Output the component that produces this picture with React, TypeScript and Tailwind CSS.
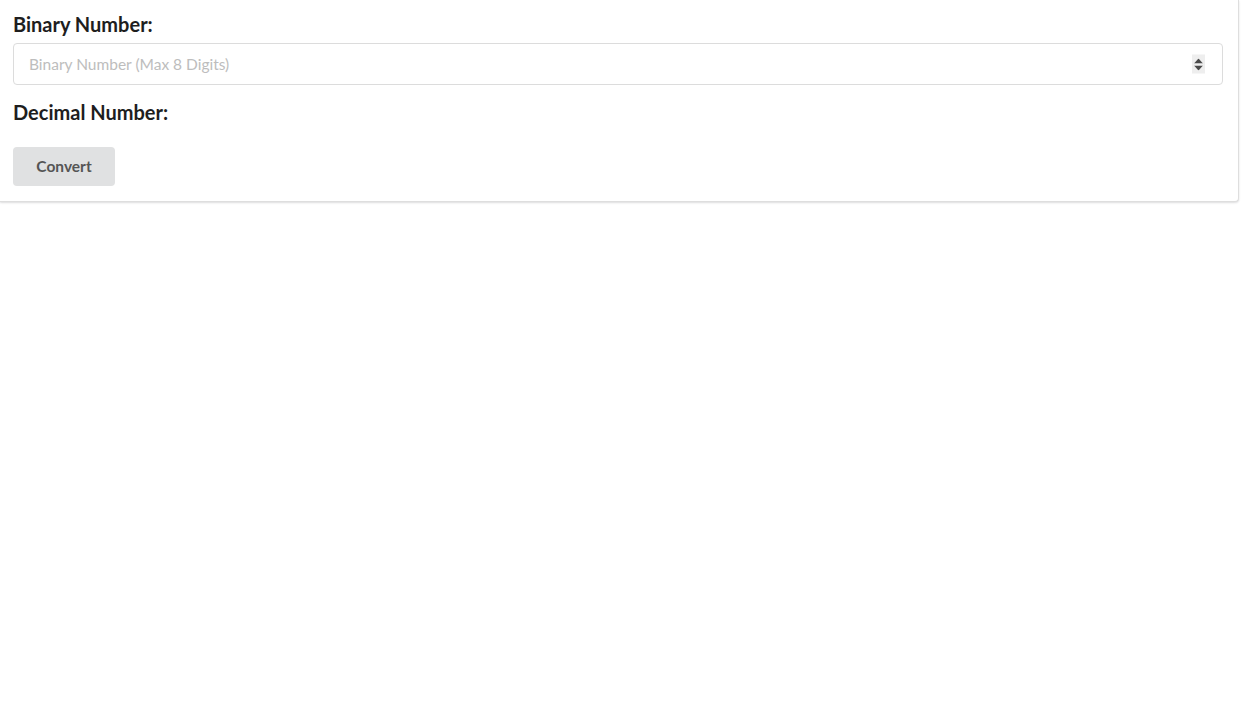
import React, { useState } from "react";

const Spinner: React.FC = () => (
  <div className="absolute right-[18px] top-1/2 -translate-y-1/2 w-[13px] h-[19px] bg-[#eeeeee] flex flex-col items-center justify-center gap-[2px]">
    <svg width="9" height="5" viewBox="0 0 9 5">
      <path d="M4.5 0 L9 5 L0 5 Z" fill="#4a4a4a" />
    </svg>
    <svg width="9" height="5" viewBox="0 0 9 5">
      <path d="M0 0 L9 0 L4.5 5 Z" fill="#4a4a4a" />
    </svg>
  </div>
);

const App: React.FC = () => {
  const [binary, setBinary] = useState("");
  const [decimal, setDecimal] = useState("");

  // convert binary string to decimal
  const convert = () => {
    if (/^[01]{1,8}$/.test(binary)) setDecimal(String(parseInt(binary, 2)));
    else setDecimal("");
  };

  return (
    <div className="min-h-screen bg-white font-['Lato','Liberation_Sans',sans-serif] text-[#1e1e1e]">
      <div className="w-[1239px] bg-white border-r border-b border-[#dedede] rounded-br-[4px] shadow-[0_1px_2px_0_rgba(34,36,38,0.15)] pl-[13px] pr-[15px] pt-[10px] pb-[15px]">
        <label className="block text-[20px] leading-[28px] font-bold">Binary Number:</label>
        <div className="relative mt-[5px]">
          <input
            type="text"
            value={binary}
            onChange={(e) => setBinary(e.target.value)}
            placeholder="Binary Number (Max 8 Digits)"
            className="w-full h-[42px] border border-[#dcdcdc] rounded-[4px] pl-[15px] pr-[40px] text-[15.5px] text-[#333] placeholder:text-[#bdbdbd] outline-none"
          />
          <Spinner />
        </div>
        <div className="mt-[13px] text-[20px] leading-[28px] font-bold">
          Decimal Number:{decimal && <span className="ml-2">{decimal}</span>}
        </div>
        <button
          onClick={convert}
          className="mt-[21px] h-[39px] w-[102px] rounded-[4px] bg-[#e0e1e2] text-[15.5px] font-bold text-[#555555]"
        >
          Convert
        </button>
      </div>
    </div>
  );
};

export default App;
